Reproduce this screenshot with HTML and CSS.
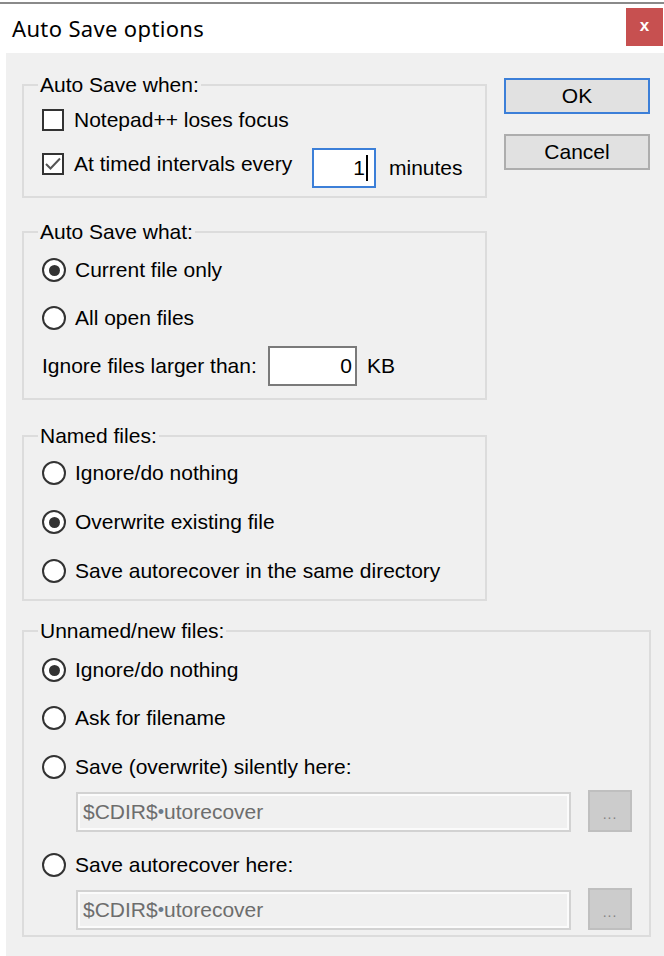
FILE: index.html
```html
<!DOCTYPE html>
<html>
<head>
<meta charset="utf-8">
<link rel="stylesheet" href="styles.css">
</head>
<body>
<div class="window">
  <div class="titlebar">
    <span class="title">Auto Save options</span>
    <span class="close">x</span>
  </div>
  <div class="client">
    <div class="top">
      <div class="groups">
        <fieldset class="group g1">
          <legend>Auto Save when:</legend>
          <div class="opt">
            <span class="check"></span><span>Notepad++ loses focus</span>
          </div>
          <div class="opt">
            <div class="checklabel">
              <span class="check on"><svg viewBox="0 0 18 18" width="18" height="18"><polyline points="2,9 6.5,13.5 16,3.5" fill="none" stroke="#555" stroke-width="2"/></svg></span><span>At timed intervals every</span>
            </div>
            <span class="edit focus">1<span class="caret"></span></span>
            <span class="unit">minutes</span>
          </div>
        </fieldset>
        <fieldset class="group g2">
          <legend>Auto Save what:</legend>
          <div class="opt"><span class="radio on"></span><span>Current file only</span></div>
          <div class="opt"><span class="radio"></span><span>All open files</span></div>
          <div class="opt">
            <span class="sizelabel">Ignore files larger than:</span>
            <span class="edit size">0</span>
            <span class="unit kb">KB</span>
          </div>
        </fieldset>
        <fieldset class="group g3">
          <legend>Named files:</legend>
          <div class="opt"><span class="radio"></span><span>Ignore/do nothing</span></div>
          <div class="opt"><span class="radio on"></span><span>Overwrite existing file</span></div>
          <div class="opt"><span class="radio"></span><span>Save autorecover in the same directory</span></div>
        </fieldset>
      </div>
      <div class="buttons">
        <span class="btn default">OK</span>
        <span class="btn">Cancel</span>
      </div>
    </div>
    <fieldset class="group g4">
      <legend>Unnamed/new files:</legend>
      <div class="opt o1"><span class="radio on"></span><span>Ignore/do nothing</span></div>
      <div class="opt o2"><span class="radio"></span><span>Ask for filename</span></div>
      <div class="opt o3"><span class="radio"></span><span>Save (overwrite) silently here:</span></div>
      <div class="pathrow p1">
        <span class="path">$CDIR$<span class="dot">•</span>utorecover</span>
        <span class="browse">...</span>
      </div>
      <div class="opt o4"><span class="radio"></span><span>Save autorecover here:</span></div>
      <div class="pathrow p2">
        <span class="path">$CDIR$<span class="dot">•</span>utorecover</span>
        <span class="browse">...</span>
      </div>
    </fieldset>
  </div>
</div>
</body>
</html>
```

FILE: styles.css
```css
html, body {
  margin: 0;
  padding: 0;
  background: #ffffff;
}
.window {
  width: 664px;
  height: 956px;
  overflow: hidden;
  display: flex;
  flex-direction: column;
  font-family: "Liberation Sans", Arial, sans-serif;
  font-size: 21px;
  color: #000;
}
.titlebar {
  margin-top: 2px;
  border-top: 2px solid #8a8a8a;
  height: 49px;
  background: #fff;
  display: flex;
  align-items: flex-start;
  justify-content: space-between;
}
.title {
  font-family: "Noto Sans", "Open Sans", sans-serif;
  font-size: 22px;
  letter-spacing: 0.35px;
  line-height: 26px;
  margin-top: 11px;
  margin-left: 12px;
  color: #000;
}
.close {
  width: 37px;
  height: 38px;
  margin-top: 4px;
  margin-right: 1px;
  background: #c75050;
  color: #fff;
  font-family: "Liberation Sans", Arial, sans-serif;
  font-weight: bold;
  font-size: 17px;
  display: flex;
  align-items: center;
  justify-content: center;
  line-height: 1;
  padding-bottom: 3px;
  box-sizing: border-box;
}
.client {
  flex: 1;
  margin-left: 6px;
  background: #f0f0f0;
  padding: 20px 0 0 16px;
}
.top {
  display: flex;
  gap: 17px;
}
.groups {
  width: 465px;
  display: flex;
  flex-direction: column;
}
.group {
  border: 2px solid #dcdcdc;
  margin: 0;
  min-width: 0;
  padding: 0 0 0 18px;
  display: flex;
  flex-direction: column;
}
.group legend {
  padding: 0 2px;
  margin-left: -4px;
  line-height: 24px;
  font-size: 21px;
}
.g1 { padding-top: 3px; padding-bottom: 8px; }
.g1 .opt + .opt { margin-top: 8px; }
.g2 { margin-top: 22px; padding-top: 6px; padding-bottom: 12px; }
.g2 .opt + .opt { margin-top: 8px; }
.g3 { margin-top: 24px; padding-top: 5px; padding-bottom: 8px; }
.g3 .opt + .opt { margin-top: 9px; }
.g4 { margin-top: 18px; width: 629px; box-sizing: border-box; padding-top: 7px; padding-bottom: 5px; }
.o2 { margin-top: 8px; }
.o3 { margin-top: 9px; }
.p1 { margin-top: 3px; }
.o4 { margin-top: 13px; }
.p2 { margin-top: 3px; }

.opt {
  display: flex;
  align-items: center;
  height: 40px;
  white-space: nowrap;
}
.checklabel {
  display: flex;
  align-items: center;
  width: 270px;
  margin-bottom: 8px;
}
.check {
  width: 22px;
  height: 22px;
  box-sizing: border-box;
  border: 2px solid #333;
  background: #fff;
  margin-right: 10px;
  display: flex;
  align-items: center;
  justify-content: center;
  flex: none;
}
.check svg { display: block; }
.radio {
  width: 24px;
  height: 24px;
  box-sizing: border-box;
  border: 2px solid #333;
  border-radius: 50%;
  background: #fff;
  margin-right: 9px;
  flex: none;
  display: flex;
  align-items: center;
  justify-content: center;
}
.radio.on::after {
  content: "";
  width: 11px;
  height: 11px;
  border-radius: 50%;
  background: #333;
}
.edit {
  height: 40px;
  box-sizing: border-box;
  background: #fff;
  display: flex;
  align-items: center;
  justify-content: flex-end;
}
.edit.focus {
  width: 64px;
  border: 2px solid #3c7fd8;
  padding-right: 6px;
}
.caret {
  width: 2px;
  height: 26px;
  background: #000;
  margin-left: 1px;
}
.edit.size {
  width: 89px;
  border: 2px solid #7a7a7a;
  padding-right: 3px;
}
.sizelabel {
  width: 226px;
}
.unit {
  margin-left: 13px;
}
.unit.kb {
  margin-left: 10px;
}
.buttons {
  display: flex;
  flex-direction: column;
  gap: 20px;
  padding-top: 5px;
}
.btn {
  width: 146px;
  height: 36px;
  box-sizing: border-box;
  border: 2px solid #adadad;
  background: #e1e1e1;
  display: flex;
  align-items: center;
  justify-content: center;
}
.btn.default {
  border-color: #3c7fd8;
}
.pathrow {
  display: flex;
  align-items: flex-end;
  height: 42px;
  margin-left: 34px;
  gap: 17px;
}
.path {
  width: 495px;
  height: 40px;
  box-sizing: border-box;
  border: 2px solid #d2d2d2;
  box-shadow: inset 0 0 0 2px #fbfbfb;
  background: #f0f0f0;
  color: #6d6d6d;
  display: flex;
  align-items: center;
  padding-left: 5px;
  white-space: nowrap;
}
.dot {
  color: #6d7b8c;
  font-size: 18px;
}
.browse {
  width: 44px;
  height: 42px;
  box-sizing: border-box;
  border: 2px solid #bfbfbf;
  background: #cccccc;
  color: #838383;
  font-size: 14px;
  letter-spacing: 1px;
  display: flex;
  align-items: flex-end;
  justify-content: center;
  padding-bottom: 8px;
}
```
